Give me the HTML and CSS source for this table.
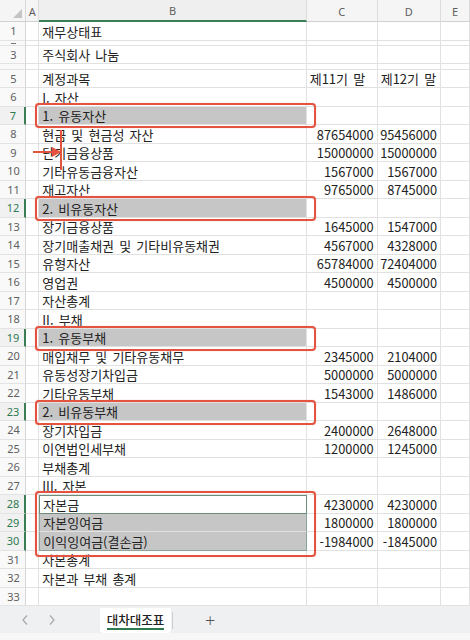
FILE: index.html
```html
<!DOCTYPE html>
<html lang="ko">
<head>
<meta charset="utf-8">
<link rel="stylesheet" href="styles.css">
</head>
<body>
<div class="app">
  <div class="sheet">
    <div class="row head">
      <div class="corner"><span class="tri"></span></div>
      <div class="ch">A</div>
      <div class="ch ch-sel">B</div>
      <div class="ch">C</div>
      <div class="ch">D</div>
      <div class="ch">E</div>
    </div>
    <div class="row"><div class="rh">1</div><div class="c"></div><div class="c">재무상태표</div><div class="c"></div><div class="c"></div><div class="c"></div></div>
    <div class="row tiny"><div class="rh"><span class="dash"></span></div><div class="c"></div><div class="c"></div><div class="c"></div><div class="c"></div><div class="c"></div></div>
    <div class="row"><div class="rh">3</div><div class="c"></div><div class="c">주식회사 나눔</div><div class="c"></div><div class="c"></div><div class="c"></div></div>
    <div class="row tiny2"><div class="rh"></div><div class="c"></div><div class="c"></div><div class="c"></div><div class="c"></div><div class="c"></div></div>
    <div class="row"><div class="rh">5</div><div class="c"></div><div class="c">계정과목</div><div class="c">제11기 말</div><div class="c">제12기 말</div><div class="c"></div></div>
    <div class="row"><div class="rh">6</div><div class="c"></div><div class="c">I. 자산</div><div class="c"></div><div class="c"></div><div class="c"></div></div>
    <div class="row"><div class="rh rh-sel">7</div><div class="c"></div><div class="c sel">1. 유동자산</div><div class="c"></div><div class="c"></div><div class="c"></div></div>
    <div class="row"><div class="rh">8</div><div class="c"></div><div class="c">현금 및 현금성 자산</div><div class="c n">87654000</div><div class="c n">95456000</div><div class="c"></div></div>
    <div class="row"><div class="rh">9</div><div class="c"></div><div class="c">단기금융상품</div><div class="c n">15000000</div><div class="c n">15000000</div><div class="c"></div></div>
    <div class="row"><div class="rh">10</div><div class="c"></div><div class="c">기타유동금융자산</div><div class="c n">1567000</div><div class="c n">1567000</div><div class="c"></div></div>
    <div class="row"><div class="rh">11</div><div class="c"></div><div class="c">재고자산</div><div class="c n">9765000</div><div class="c n">8745000</div><div class="c"></div></div>
    <div class="row"><div class="rh rh-sel">12</div><div class="c"></div><div class="c sel">2. 비유동자산</div><div class="c"></div><div class="c"></div><div class="c"></div></div>
    <div class="row"><div class="rh">13</div><div class="c"></div><div class="c">장기금융상품</div><div class="c n">1645000</div><div class="c n">1547000</div><div class="c"></div></div>
    <div class="row"><div class="rh">14</div><div class="c"></div><div class="c">장기매출채권 및 기타비유동채권</div><div class="c n">4567000</div><div class="c n">4328000</div><div class="c"></div></div>
    <div class="row"><div class="rh">15</div><div class="c"></div><div class="c">유형자산</div><div class="c n">65784000</div><div class="c n">72404000</div><div class="c"></div></div>
    <div class="row"><div class="rh">16</div><div class="c"></div><div class="c">영업권</div><div class="c n">4500000</div><div class="c n">4500000</div><div class="c"></div></div>
    <div class="row"><div class="rh">17</div><div class="c"></div><div class="c">자산총계</div><div class="c"></div><div class="c"></div><div class="c"></div></div>
    <div class="row"><div class="rh">18</div><div class="c"></div><div class="c">II. 부채</div><div class="c"></div><div class="c"></div><div class="c"></div></div>
    <div class="row"><div class="rh rh-sel">19</div><div class="c"></div><div class="c sel">1. 유동부채</div><div class="c"></div><div class="c"></div><div class="c"></div></div>
    <div class="row"><div class="rh">20</div><div class="c"></div><div class="c">매입채무 및 기타유동채무</div><div class="c n">2345000</div><div class="c n">2104000</div><div class="c"></div></div>
    <div class="row"><div class="rh">21</div><div class="c"></div><div class="c">유동성장기차입금</div><div class="c n">5000000</div><div class="c n">5000000</div><div class="c"></div></div>
    <div class="row"><div class="rh">22</div><div class="c"></div><div class="c">기타유동부채</div><div class="c n">1543000</div><div class="c n">1486000</div><div class="c"></div></div>
    <div class="row"><div class="rh rh-sel">23</div><div class="c"></div><div class="c sel">2. 비유동부채</div><div class="c"></div><div class="c"></div><div class="c"></div></div>
    <div class="row"><div class="rh">24</div><div class="c"></div><div class="c">장기차입금</div><div class="c n">2400000</div><div class="c n">2648000</div><div class="c"></div></div>
    <div class="row"><div class="rh">25</div><div class="c"></div><div class="c">이연법인세부채</div><div class="c n">1200000</div><div class="c n">1245000</div><div class="c"></div></div>
    <div class="row"><div class="rh">26</div><div class="c"></div><div class="c">부채총계</div><div class="c"></div><div class="c"></div><div class="c"></div></div>
    <div class="row"><div class="rh">27</div><div class="c"></div><div class="c">III. 자본</div><div class="c"></div><div class="c"></div><div class="c"></div></div>
    <div class="row"><div class="rh rh-sel">28</div><div class="c"></div><div class="c active">자본금</div><div class="c n">4230000</div><div class="c n">4230000</div><div class="c"></div></div>
    <div class="row"><div class="rh rh-sel">29</div><div class="c"></div><div class="c sel range-mid">자본잉여금</div><div class="c n">1800000</div><div class="c n">1800000</div><div class="c"></div></div>
    <div class="row"><div class="rh rh-sel">30</div><div class="c"></div><div class="c sel range-end">이익잉여금(결손금)</div><div class="c n">-1984000</div><div class="c n">-1845000</div><div class="c"></div></div>
    <div class="row"><div class="rh">31</div><div class="c"></div><div class="c">자본총계</div><div class="c"></div><div class="c"></div><div class="c"></div></div>
    <div class="row"><div class="rh">32</div><div class="c"></div><div class="c">자본과 부채 총계</div><div class="c"></div><div class="c"></div><div class="c"></div></div>
    <div class="row"><div class="rh">33</div><div class="c"></div><div class="c"></div><div class="c"></div><div class="c"></div><div class="c"></div></div>

    <div class="mark m7"></div>
    <div class="mark m12"></div>
    <div class="mark m19"></div>
    <div class="mark m23"></div>
    <div class="mark m28"></div>
    <svg class="arrow" width="40" height="50" viewBox="0 0 40 50">
      <line x1="1" y1="27" x2="22" y2="27" stroke="#e4533f" stroke-width="2"/>
      <polygon points="20,22 29,27 20,32" fill="#e4533f"/>
      <line x1="29" y1="5" x2="29" y2="45" stroke="#e4533f" stroke-width="2"/>
    </svg>
  </div>
  <div class="tabbar">
    <div class="nav">
      <svg width="10" height="12" viewBox="0 0 10 12"><path d="M7 1.5 L3 6 L7 10.5" fill="none" stroke="#a8a8a8" stroke-width="1.2"/></svg>
      <svg width="10" height="12" viewBox="0 0 10 12"><path d="M3 1.5 L7 6 L3 10.5" fill="none" stroke="#a8a8a8" stroke-width="1.2"/></svg>
    </div>
    <div class="tab"><span class="tab-label">대차대조표</span></div>
    <div class="sep"></div>
    <div class="add">+</div>
  </div>
</div>
</body>
</html>
```

FILE: styles.css
```css
* { box-sizing: border-box; }
html, body { margin: 0; padding: 0; background: #ffffff; }
body {
  font-family: "Noto Sans CJK KR", "Noto Sans", sans-serif;
  color: #222222;
  width: 470px;
  height: 640px;
  overflow: hidden;
}
.app { display: flex; flex-direction: column; height: 640px; }
.sheet { position: relative; flex: none; }

.row {
  display: grid;
  grid-template-columns: 26px 13.3px 267.4px 71px 63.3px 1fr;
  height: 18.5px;
}
.row.head { height: 22px; background: #f5f5f5; }
.row.tiny { height: 5px; }
.row.tiny2 { height: 5.5px; }

.corner {
  position: relative;
  border-right: 1px solid #d9d9d9;
  border-bottom: 1px solid #d0d0d0;
}
.tri {
  position: absolute;
  right: 3px;
  bottom: 3px;
  width: 0;
  height: 0;
  border-left: 9px solid transparent;
  border-bottom: 9px solid #c4c4c4;
}
.ch {
  display: flex;
  align-items: center;
  justify-content: center;
  font-family: "Noto Sans", sans-serif;
  font-size: 11px;
  color: #5f5f5f;
  border-right: 1px solid #dcdcdc;
  border-bottom: 1px solid #d0d0d0;
  padding-top: 1px;
}
.ch-sel { border-bottom: 2px solid #3b7d55; background: #efefef; }

.rh {
  display: flex;
  align-items: center;
  justify-content: center;
  font-family: "Noto Sans", sans-serif;
  font-size: 11px;
  color: #606060;
  background: #f9f9f9;
  border-right: 1px solid #d6d6d6;
  border-bottom: 1px solid #e3e3e3;
  overflow: hidden;
  padding-left: 2px;
}
.rh-sel { color: #2f7a50; border-right: 2px solid #3b7d55; background: #f1f1f1; }
.dash { display: block; width: 5px; height: 1px; background: #777; margin-top: 1px; }

.c {
  display: flex;
  align-items: flex-end;
  font-size: 13px;
  line-height: 17px;
  word-spacing: 1.5px;
  padding: 0 3px 0 3px;
  white-space: nowrap;
  overflow: hidden;
  border-right: 1px solid #e1e1e1;
  border-bottom: 1px solid #e1e1e1;
}
.row.tiny .c, .row.tiny2 .c { line-height: 4px; }
.c.n { justify-content: flex-end; font-size: 12.8px; }
.c.sel { background: #c6c6c6; }
.c.active {
  background: #ffffff;
  border: 1px solid #6b8d79;
  border-bottom: 1px solid #6b8d79;
}
.c.range-mid { border-left: 1px solid #8aa597; border-right: 1px solid #8aa597; }
.c.range-end { border-left: 1px solid #8aa597; border-right: 1px solid #8aa597; border-bottom: 1px solid #8aa597; }

.mark {
  position: absolute;
  left: 35px;
  width: 281px;
  border: 2px solid #e4533f;
  border-radius: 4px;
  box-shadow: 0 0 1px rgba(228, 83, 63, 0.6);
}
.m7 { top: 103px; height: 25px; }
.m12 { top: 196px; height: 25px; }
.m19 { top: 326px; height: 25px; }
.m23 { top: 400px; height: 25px; }
.m28 { top: 491px; height: 66px; }
.arrow { position: absolute; left: 32px; top: 125px; }

.tabbar {
  flex: 1;
  display: flex;
  align-items: stretch;
  background: #eff0f2;
  border-bottom: 7px solid #f7f7f7;
}
.nav {
  width: 100px;
  display: flex;
  align-items: center;
  gap: 17px;
  padding-left: 20px;
}
.tab {
  width: 71px;
  background: #ffffff;
  margin-top: 2px;
  border-radius: 0 0 4px 4px;
  display: flex;
  align-items: center;
  justify-content: center;
  position: relative;
}
.tab-label {
  font-size: 12.5px;
  color: #222;
  font-weight: 500;
  border-bottom: 2px solid #2e7a4e;
  line-height: 17px;
}
.sep { width: 1px; background: #cfcfcf; margin: 6px 0 4px 1px; }
.add {
  margin-left: 32px;
  display: flex;
  align-items: center;
  font-family: "Noto Sans", sans-serif;
  font-size: 18px;
  font-weight: 300;
  color: #555;
}
```
